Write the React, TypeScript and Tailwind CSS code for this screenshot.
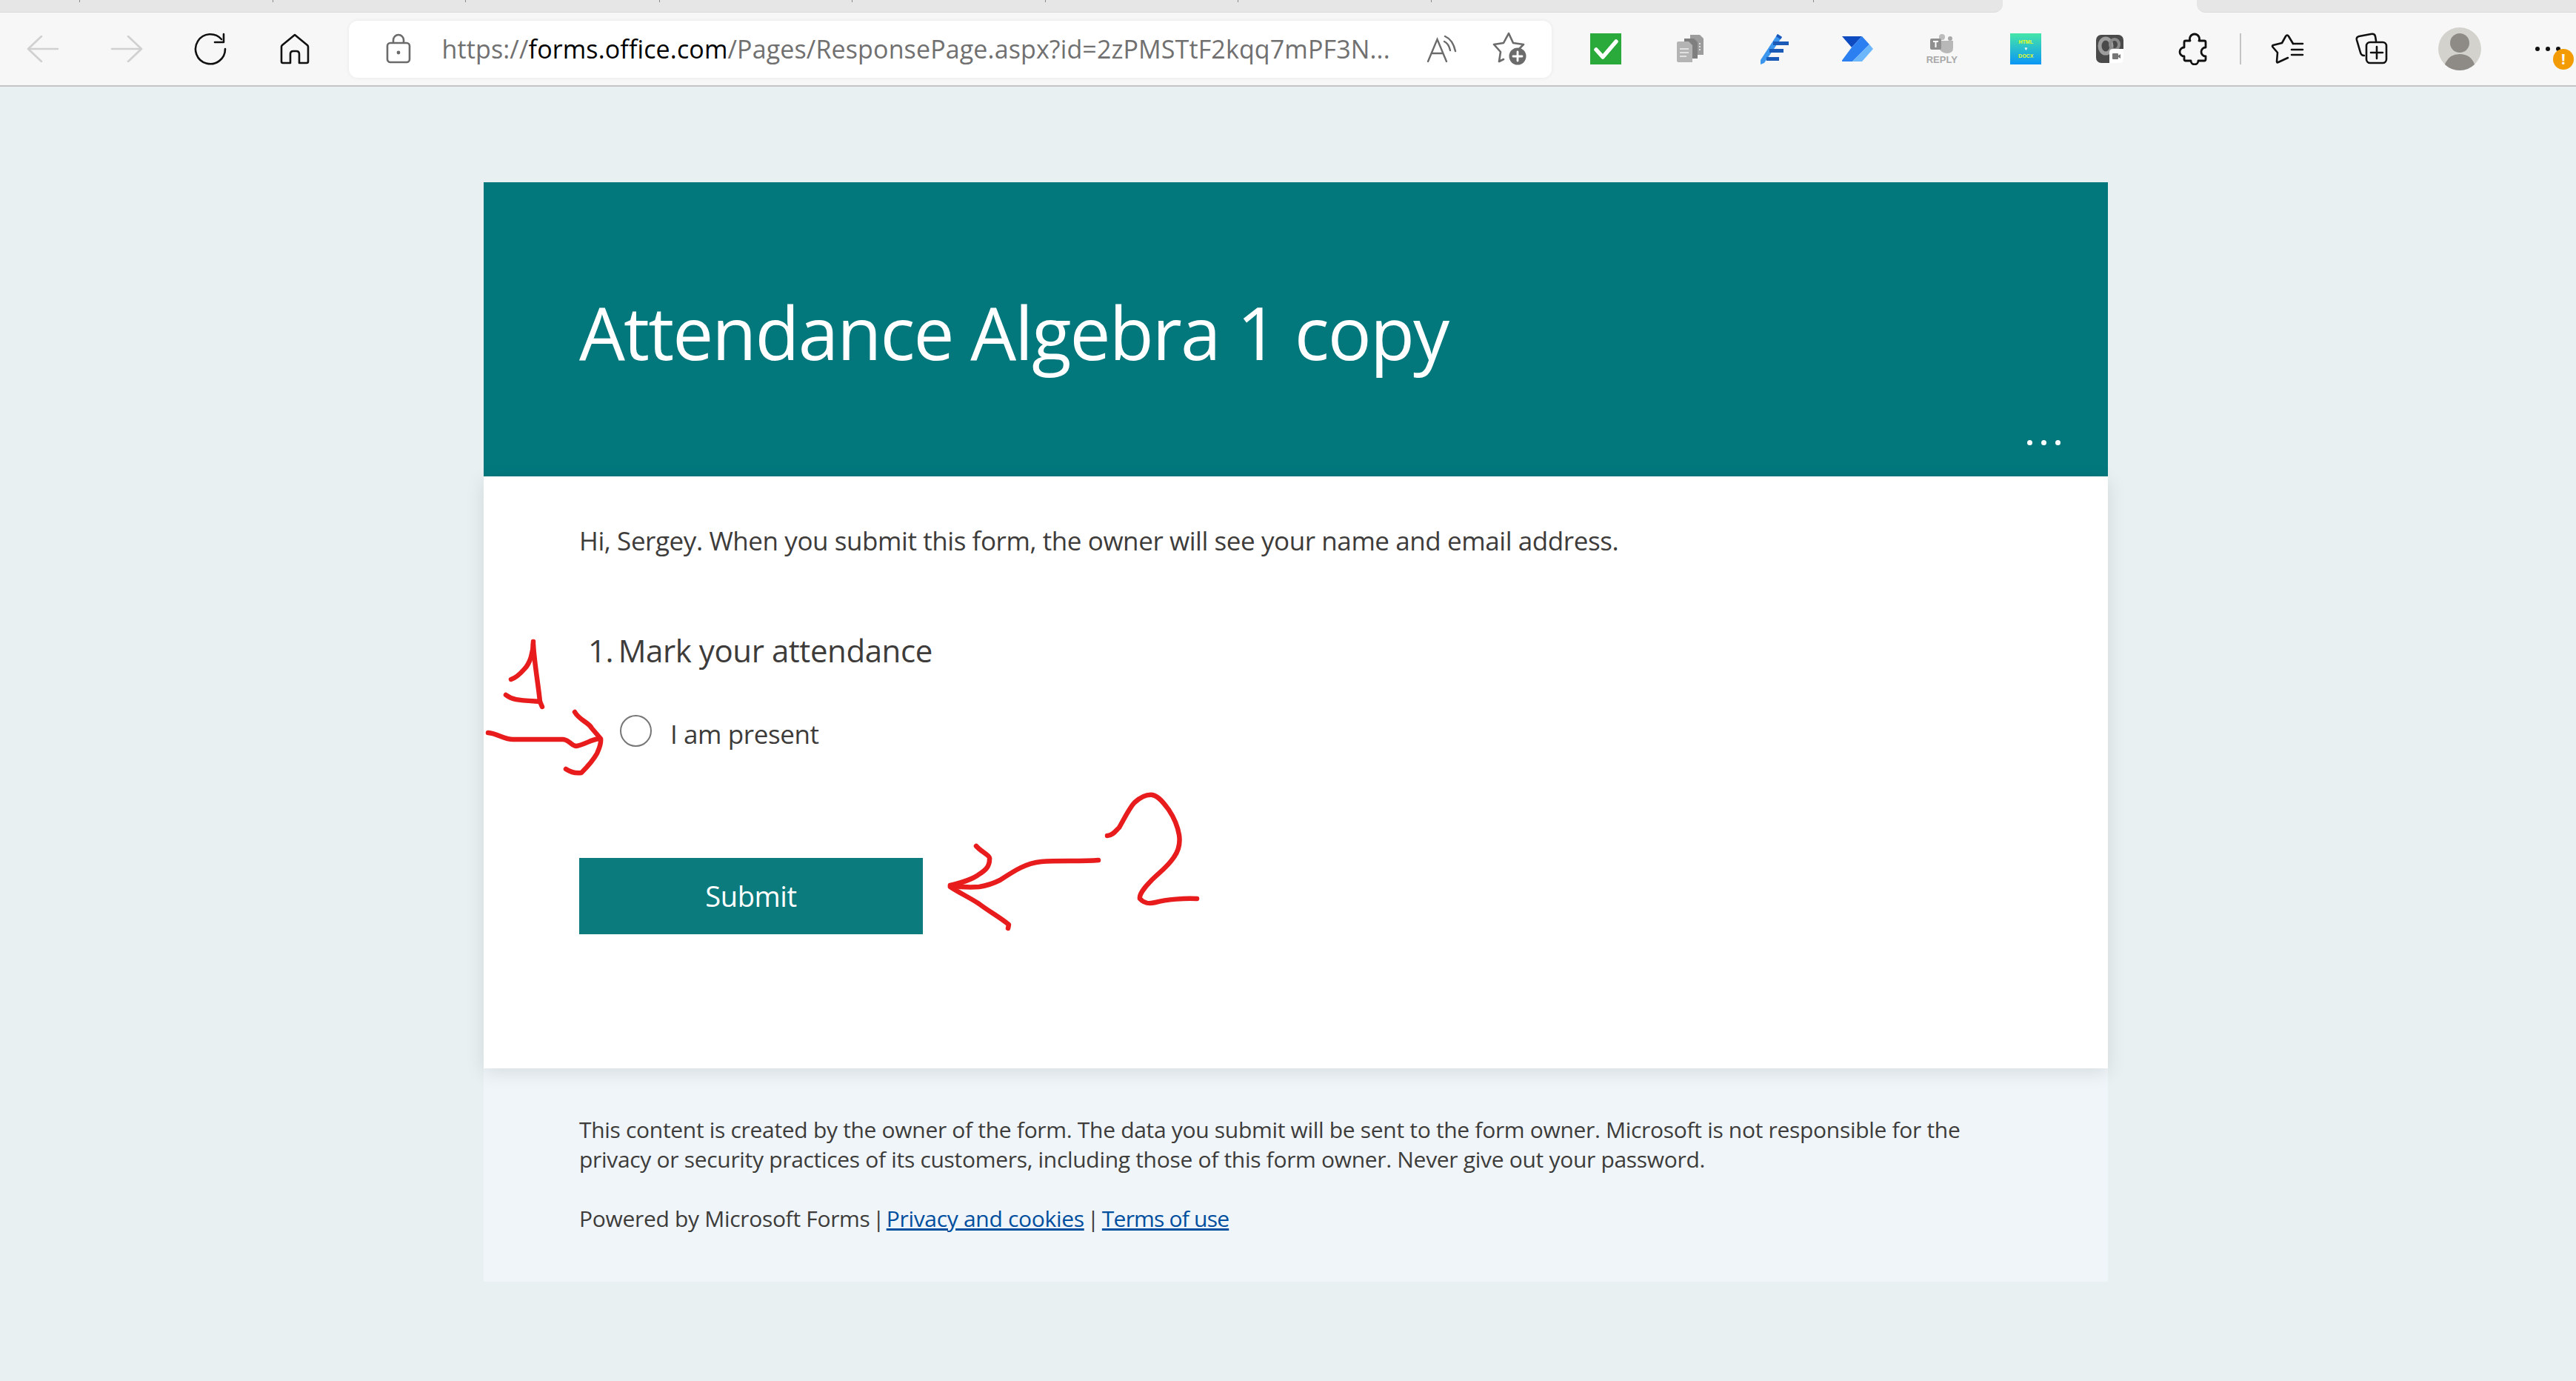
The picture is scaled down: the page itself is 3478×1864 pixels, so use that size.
const FONT = 'font-["Open_Sans",sans-serif]';

function Back({ flip }: { flip?: boolean }) {
  return (
    <svg width="44" height="36" viewBox="0 0 44 36" fill="none" stroke="#d0d0d0" strokeWidth="2.6" strokeLinecap="round" strokeLinejoin="round" className={flip ? 'rotate-180' : ''}>
      <path d="M42 18H2M20 1L2 18l18 17" />
    </svg>
  );
}

function Refresh() {
  return (
    <svg width="44" height="44" viewBox="0 0 44 44" fill="none" stroke="#111" strokeWidth="2.6" strokeLinecap="round" strokeLinejoin="round">
      <path d="M37 9A20 20 0 1 0 42 22" />
      <path d="M40 2v11H28" />
    </svg>
  );
}

function Home() {
  return (
    <svg width="40" height="42" viewBox="0 0 40 42" fill="none" stroke="#111" strokeWidth="2.6" strokeLinejoin="round">
      <path d="M20 2L3 16q-1 1-1 2v20q0 2 2 2h10V28q0-4 4-4h4q4 0 4 4v12h10q2 0 2-2V18q0-1-1-2z" />
    </svg>
  );
}

function Lock() {
  return (
    <svg width="34" height="42" viewBox="0 0 34 42" fill="none" stroke="#6b6b6b" strokeWidth="2.6">
      <rect x="2" y="13" width="30" height="26" rx="4" />
      <path d="M10 13V9a7 7 0 0 1 14 0v4" />
      <circle cx="17" cy="26" r="2.4" fill="#6b6b6b" stroke="none" />
    </svg>
  );
}

function Ext({ children }: { children: React.ReactNode }) {
  return <div className="w-[113.4px] h-full flex items-center justify-center shrink-0">{children}</div>;
}

const ticks = [107, 368, 628, 890, 1150, 1411, 1671, 1932, 2448];

function Toolbar() {
  return (
    <div className="h-[117px] shrink-0 flex flex-col bg-[#f7f7f7]">
      <div className="h-[17px] flex relative">
        <div className="w-[2704px] bg-[#e6e6e6] rounded-br-[12px] border-b border-[#dcdcdc]" />
        <div className="w-[262px]" />
        <div className="flex-1 bg-[#e6e6e6] rounded-bl-[12px] border-b border-[#dcdcdc]" />
        {ticks.map((x) => (
          <div key={x} className="absolute top-0 w-[1px] h-[3px] bg-[#8a8a8a]" style={{ left: x }} />
        ))}
      </div>
      <div className="flex-1 border-b-2 border-[#c4c4c4] flex items-center pl-[1px]">
        <Ext><Back /></Ext>
        <Ext><Back flip /></Ext>
        <Ext><Refresh /></Ext>
        <Ext><Home /></Ext>
        <div className="w-[1624px] h-[77px] ml-[16px] bg-white rounded-[12px] shadow-[0_0_5px_rgba(0,0,0,0.07)] flex items-center shrink-0">
          <div className="w-[126px] flex justify-center pl-[8px] shrink-0"><Lock /></div>
          <div className={`${FONT} text-[34px] text-[#707070] whitespace-nowrap tracking-[0.13px]`}>
            https://<span className="text-black">forms.office.com</span>/Pages/ResponsePage.aspx?id=2zPMSTtF2kqq7mPF3N...
          </div>
          <div className="ml-auto flex items-center gap-[47px] pr-[32px]">
            <svg width="42" height="38" viewBox="0 0 42 38" fill="none" stroke="#6b6b6b" strokeWidth="2.4" strokeLinecap="round">
              <path d="M2 36L14.500 6 27 36M7 25h15" />
              <path d="M24 9c4 2 7 7 8 12M25 2c7 3 12 11 14 20" />
            </svg>
            <svg width="48" height="46" viewBox="0 0 48 46" fill="none" stroke="#6b6b6b" strokeWidth="2.6" strokeLinecap="round" strokeLinejoin="round">
              <path d="M33 26l9-9-14-2-6-13-7 13-13 2 9 10-2 13 6-3" />
              <circle cx="34" cy="33" r="11.5" fill="#6b6b6b" stroke="none" />
              <path d="M34 27v12M28 33h12" stroke="#fff" strokeWidth="2.8" />
            </svg>
          </div>
        </div>
        <div className="flex items-center h-full ml-[17px] flex-1">
          <Ext>
            <div className="w-[42px] h-[42px] bg-[#2aaa3a] flex items-center justify-center">
              <svg width="42" height="42" viewBox="0 0 42 42" fill="none" stroke="#fff" strokeWidth="5.5" strokeLinecap="round" strokeLinejoin="round">
                <path d="M8 22l9 10L35 11" />
              </svg>
            </div>
          </Ext>
          <Ext>
            <svg width="40" height="40" viewBox="0 0 40 40">
              <path d="M20 1h13l5 5v22H20z" fill="#9c9c9c" />
              <path d="M12 6h13l5 5v22H12z" fill="#7f7f7f" />
              <path d="M4 10h14l5 5v23H4a2 2 0 0 1-2-2V12a2 2 0 0 1 2-2z" fill="#b4b4b4" />
              <path d="M6 20h12M6 25h12M6 30h9" stroke="#eee" strokeWidth="1.6" />
              <path d="M33 12v12" stroke="#ddd" strokeWidth="2" strokeDasharray="2 2" />
            </svg>
          </Ext>
          <Ext>
            <svg width="40" height="42" viewBox="0 0 40 42">
              <path d="M25 1l6 4L7 40l-5 2 0-6z" fill="#3d96ee" />
              <path d="M25 1l6 4-2 3-6-4z" fill="#1a56b8" />
              <rect x="19" y="11" width="21" height="5" fill="#1c5ab8" />
              <rect x="14" y="21" width="19" height="5" fill="#1c5ab8" />
              <rect x="10" y="32" width="17" height="5" fill="#1c5ab8" />
            </svg>
          </Ext>
          <Ext>
            <svg width="42" height="34" viewBox="0 0 42 34">
              <path d="M0 0h27L13 15z" fill="#0f4bc0" />
              <path d="M13 15L27 0l10 11-23 23H1a1 1 0 0 1-1-1.500z" fill="#2b7ff0" />
              <path d="M37 11l5 6-15 17H14z" fill="#6cb6fc" />
            </svg>
          </Ext>
          <Ext>
            <div className="flex flex-col items-center leading-none">
              <svg width="32" height="27" viewBox="0 0 32 27">
                <circle cx="16" cy="4" r="4" fill="#bcbcbc" />
                <circle cx="27" cy="6" r="3" fill="#a8a8a8" />
                <path d="M12 9h19v10q0 7-8 7-8 0-11-7z" fill="#b8b8b8" />
                <rect x="0" y="6" width="15" height="15" rx="2" fill="#8f8f8f" />
                <path d="M4 10h7M7.500 10v8" stroke="#fff" strokeWidth="2" />
              </svg>
              <span className="font-['Liberation_Sans',sans-serif] font-bold text-[13px] text-[#a8a8a8] mt-[1px]">REPLY</span>
            </div>
          </Ext>
          <Ext>
            <div className="w-[42px] h-[42px] bg-[linear-gradient(#45e6a8,#0b96f5)] flex flex-col items-center justify-center leading-none font-bold text-[#e8ff20] font-['Liberation_Sans',sans-serif]">
              <span className="text-[7px]">HTML</span>
              <span className="text-[6px] my-[3px] text-white">▼</span>
              <span className="text-[7px]">DOCX</span>
            </div>
          </Ext>
          <Ext>
            <svg width="37" height="38" viewBox="0 0 37 38">
              <rect width="37" height="38" rx="7" fill="#4a4a4a" />
              <ellipse cx="13" cy="15" rx="8" ry="10" fill="none" stroke="#9e9e9e" strokeWidth="5" />
              <ellipse cx="25" cy="13" rx="6" ry="7" fill="none" stroke="#8a8a8a" strokeWidth="4" />
              <path d="M18 24q0-5 5-5h14v14q0 5-5 5H18z" fill="#fff" />
              <rect x="22" y="25" width="8" height="8" rx="1" fill="#777" />
              <path d="M30 28l3-2v6l-3-2z" fill="#777" />
            </svg>
          </Ext>
          <Ext>
            <svg width="42" height="44" viewBox="0 0 42 44" fill="none" stroke="#111" strokeWidth="2.8" strokeLinejoin="round">
              <path d="M8 13q0-2 2-2h6a6.500 6.500 0 1 1 12 0h7q2 0 2 2v7a6 6 0 1 0 0 12v4q0 2-2 2h-8a5 5 0 0 1-10 0h-7q-2 0-2-2v-4a6 6 0 1 1 0-12z" />
            </svg>
          </Ext>
          <div className="w-[2px] h-[42px] bg-[#c4c4c4] ml-[5px] mr-[6px]" />
          <Ext>
            <svg width="48" height="42" viewBox="0 0 48 42" fill="none" stroke="#111" strokeWidth="2.6" strokeLinecap="round" strokeLinejoin="round">
              <path d="M32 14L26 4q-2-3-4 0L17 13 5 16q-2 1 0 3l6 7-1 12q0 2 2 1l13-6" />
              <path d="M32 14h13M30 22h15M30 29h15" />
            </svg>
          </Ext>
          <Ext>
            <svg width="46" height="44" viewBox="0 0 46 44" fill="none" stroke="#111" strokeWidth="2.6" strokeLinecap="round" strokeLinejoin="round">
              <path d="M13 31q-4 0-5-4L3 10q-1-4 3-5l16-3q5-1 6 3l1 6" />
              <rect x="16" y="13" width="27" height="28" rx="5" />
              <path d="M30 19v16M22 27h16" />
            </svg>
          </Ext>
          <div className="ml-[6px]">
            <Ext>
              <svg width="58" height="58" viewBox="0 0 58 58">
                <circle cx="29" cy="29" r="29" fill="#d3d2cd" />
                <circle cx="29" cy="21" r="13" fill="#8e8b87" />
                <path d="M9 50Q14 36 29 36T49 50A29 29 0 0 1 9 50z" fill="#8e8b87" />
              </svg>
            </Ext>
          </div>
          <div className="relative flex-1 h-full">
            <div className="absolute left-[45px] top-[46px] flex gap-[8px]">
              <div className="w-[6px] h-[6px] rounded-full bg-[#111]" />
              <div className="w-[6px] h-[6px] rounded-full bg-[#111]" />
              <div className="w-[6px] h-[6px] rounded-full bg-[#111]" />
            </div>
            <div className="absolute left-[69px] top-[49px] w-[28px] h-[28px] rounded-full bg-[#f29b05] text-white text-[20px] font-bold flex items-center justify-center">!</div>
          </div>
        </div>
      </div>
    </div>
  );
}

function Scribbles() {
  return (
    <svg className="absolute inset-0 pointer-events-none" width="3478" height="1864" fill="none" stroke="#e81c1c" strokeWidth="6.5" strokeLinecap="round" strokeLinejoin="round">
      <path d="M720 866C720 880 716 895 708 903C702 910 696 915 690 917" />
      <path d="M720 870C722 900 727 925 729 947L732 954" />
      <path d="M683 938C692 945 700 945 729 947" />
      <path d="M659 989C672 990 682 999 694 998L760 998C768 998 772 1007 778 1007C790 1005 798 998 809 997" />
      <path d="M776 961C782 972 795 975 799 983L811 997C812 1005 808 1012 806 1017C800 1028 790 1038 785 1043C778 1044 770 1042 764 1038" />
      <path d="M1318 1142C1325 1150 1338 1155 1336 1160C1336 1170 1330 1175 1322 1180C1312 1188 1295 1192 1283 1195" />
      <path d="M1283 1195C1300 1198 1310 1198 1322 1197C1335 1195 1342 1192 1350 1188C1370 1175 1385 1165 1406 1163C1430 1161 1460 1163 1483 1161" />
      <path d="M1283 1197C1295 1205 1310 1212 1322 1220C1335 1230 1350 1238 1362 1248L1361 1253" />
      <path d="M1495 1128C1502 1128 1506 1122 1511 1117C1518 1105 1525 1090 1532 1083C1540 1076 1548 1072 1556 1073C1565 1075 1572 1085 1578 1093C1586 1105 1590 1115 1592 1127C1594 1140 1590 1150 1585 1157C1575 1172 1562 1180 1553 1190C1545 1198 1538 1208 1539 1213C1545 1220 1552 1220 1560 1218C1575 1214 1600 1212 1616 1213" />
    </svg>
  );
}

export default function App() {
  return (
    <div className={`${FONT} relative h-screen overflow-hidden bg-[#e9f0f2] flex flex-col`}>
      <Toolbar />
      <div className="w-[2193px] ml-[653px] mt-[129px] flex flex-col">
        <div className="relative h-[397px] bg-[#03787c] pl-[129px] pt-[137px] text-white">
          <h1 className="font-normal text-[98px] leading-[130px] tracking-[-1.88px]">Attendance Algebra 1 copy</h1>
          <div className="absolute left-[2084px] top-[348px] flex gap-[12px]">
            <div className="w-[7px] h-[7px] rounded-full bg-white" />
            <div className="w-[7px] h-[7px] rounded-full bg-white" />
            <div className="w-[7px] h-[7px] rounded-full bg-white" />
          </div>
        </div>
        <div className="h-[799px] bg-white pl-[129px] pt-[62px] shadow-[0_6px_24px_rgba(0,0,0,0.1)] relative text-[#3d3c3b]">
          <p className="text-[35px] leading-[50px] tracking-[-0.42px]">Hi, Sergey. When you submit this form, the owner will see your name and email address.</p>
          <div className="mt-[93px] ml-[12px] text-[42px] leading-[60px] tracking-[-0.42px]"><span className="mr-[-4px]">1.</span> Mark your attendance</div>
          <div className="mt-[53px] ml-[55px] flex items-center h-[50px]">
            <div className="w-[43px] h-[43px] rounded-full border-2 border-[#777]" />
            <span className="ml-[25px] text-[35px] tracking-[-0.4px] translate-y-[5px]">I am present</span>
          </div>
          <button className="block mt-[147px] w-[464px] h-[103px] bg-[#0b7b7e] text-white text-[38px] tracking-[-0.4px]">Submit</button>
        </div>
        <div className="h-[288px] bg-[#eff5f8] pl-[129px] pt-[63px] text-[30px] leading-[40px] text-[#3d3c3b] tracking-[-0.31px]">
          <p>This content is created by the owner of the form. The data you submit will be sent to the form owner. Microsoft is not responsible for the<br />privacy or security practices of its customers, including those of this form owner. Never give out your password.</p>
          <p className="mt-[40px]">
            Powered by Microsoft Forms <span className="ml-[-4px] mr-[-5px]">|</span> <a className="text-[#004e9e] underline">Privacy and cookies</a> <span className="mx-[-3.5px]">|</span> <a className="text-[#004e9e] underline tracking-[-0.8px]">Terms of use</a>
          </p>
        </div>
      </div>
      <Scribbles />
    </div>
  );
}
